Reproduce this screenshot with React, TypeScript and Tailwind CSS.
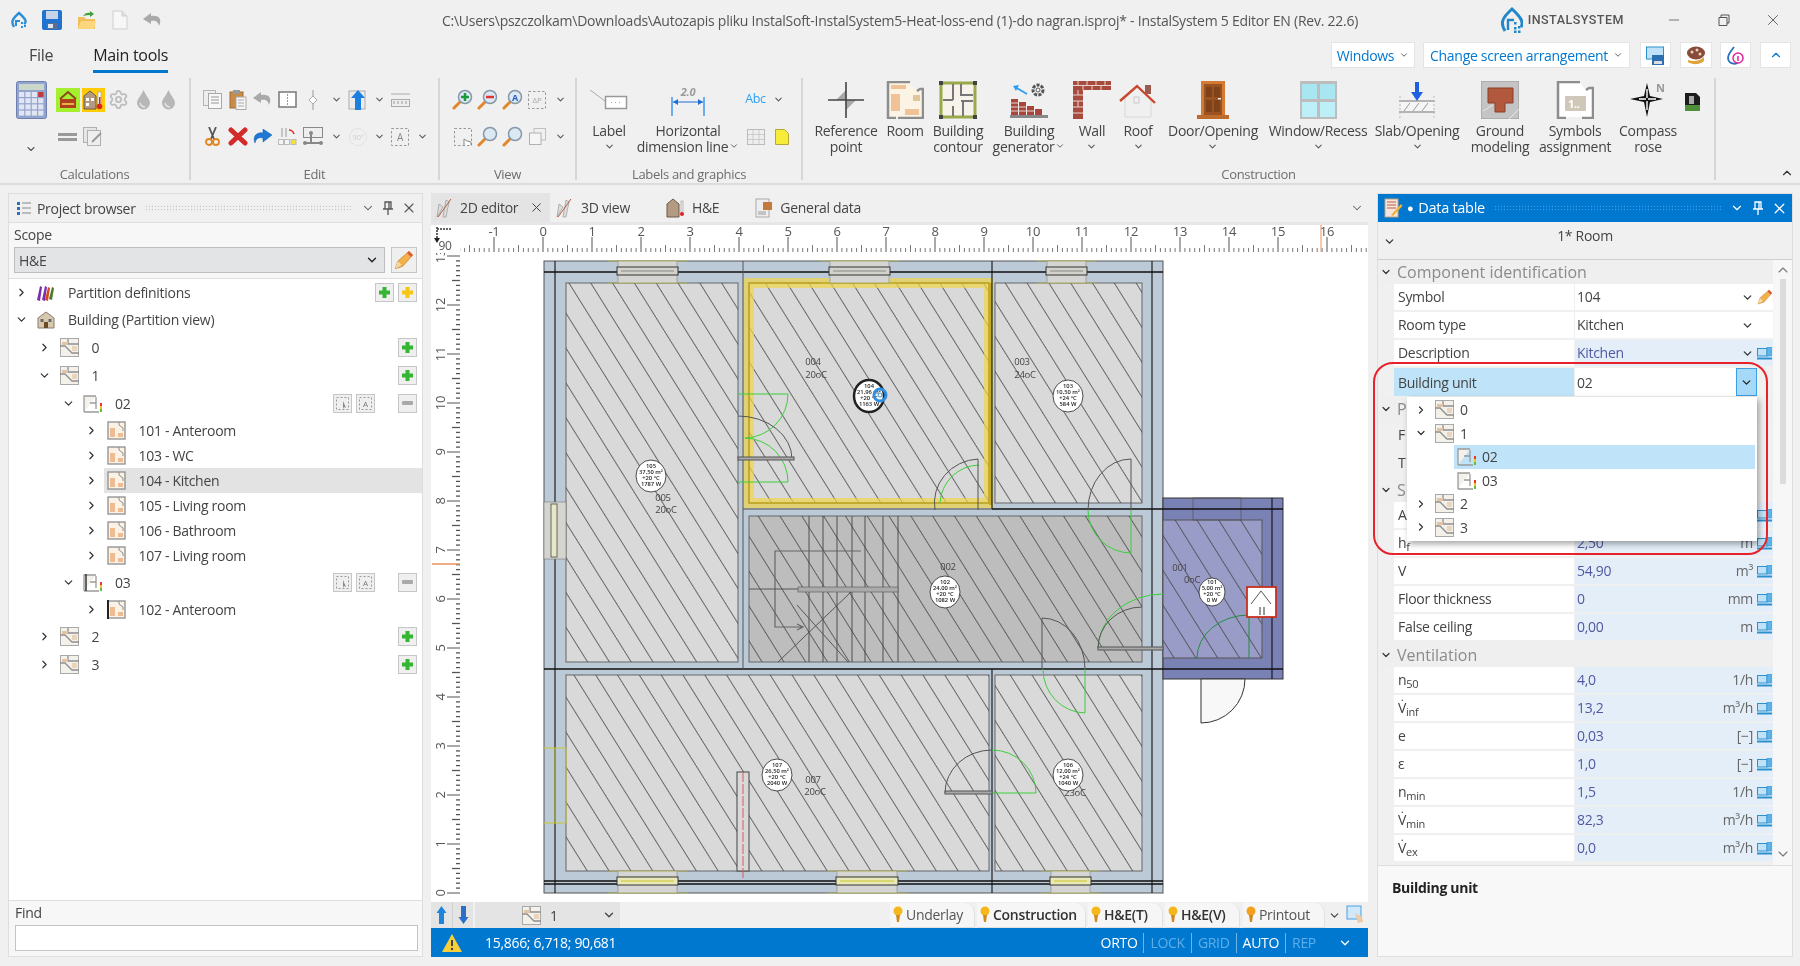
import type { ReactNode } from 'react';
import { ChevronDown, ChevronRight, ChevronUp, X, Minus, Settings } from 'lucide-react';

const Svg = ({ w, h, children, className = '' }: { w: number; h: number; children: ReactNode; className?: string }) => (
  <svg width={w} height={h} viewBox={`0 0 ${w} ${h}`} className={`shrink-0 ${className}`}>{children}</svg>
);

const Chev = ({ s = 12, c = 'text-[#555]' }: { s?: number; c?: string }) => <ChevronDown size={s} strokeWidth={2.2} className={`shrink-0 ${c}`} />;

/* ---------- title bar icons ---------- */
const HomeIcon = () => (
  <Svg w={16} h={18}>
    <path d="M3 16 C0 11 1 8 8 2 C15 8 16 11 13 13" fill="none" stroke="#2a8fd8" strokeWidth="2.4" />
    <path d="M5 15 V10 H9" fill="none" stroke="#2a8fd8" strokeWidth="2" />
    <path d="M10 11h2v2h-2zM13 14h2v2h-2zM10 15h2v2h-2z" fill="#2a8fd8" />
  </Svg>
);
const SaveIcon = () => (
  <Svg w={20} h={20}>
    <rect width="20" height="20" rx="2" fill="#2272cf" />
    <rect x="4" y="1" width="12" height="8" fill="#c7d4e6" />
    <rect x="5" y="13" width="10" height="6" fill="#5d6f8f" />
    <rect x="6" y="14" width="5" height="4" fill="#dfe6ef" />
  </Svg>
);
const OpenIcon = () => (
  <Svg w={20} h={20}>
    <path d="M1 7h6l2 2h9v10H1z" fill="#f0bf5a" />
    <path d="M1 19 4 11h15l-2 8z" fill="#fcd67e" />
    <path d="M6 6C8 3 11 2 13 3l0-2 4 3-4 3V5C11 5 9 5 6 6z" fill="#3aa13a" />
  </Svg>
);
const NewIcon = () => (
  <Svg w={16} h={20}>
    <path d="M1 1h9l5 5v13H1z" fill="#f7f7f7" stroke="#cfcfcf" />
    <path d="M10 1v5h5" fill="#e0e0e0" stroke="#cfcfcf" />
  </Svg>
);
const UndoIcon = ({ c = '#a9a9a9' }: { c?: string }) => (
  <Svg w={20} h={17}>
    <path d="M8 1 0 7l8 5V9c4-1 7 0 8 5 3-6 1-11-8-10z" fill={c} />
  </Svg>
);
const Logo = () => (
  <div className="flex items-center gap-[5px]">
    <Svg w={22} h={26}>
      <path d="M4 24C-1 16 1 11 11 2c10 9 12 14 9 18" fill="none" stroke="#2187c9" strokeWidth="3" />
      <path d="M7 23V13h6" fill="none" stroke="#2187c9" strokeWidth="2.4" />
      <path d="M13 15h2.500v2.500H13zM17 19h2.500v2.500H17zM13 20h2.500v2.500H13zM13 23.500h2.500V26H13zM17 23.500h2.500V26H17z" fill="#2187c9" />
    </Svg>
    <span className="font-['Roboto',sans-serif] text-[12.500px] font-medium tracking-[0.5px] text-[#555]">INSTALSYSTEM</span>
  </div>
);

/* ---------- ribbon icons ---------- */
const CalcIcon = () => (
  <Svg w={31} h={38}>
    <rect x=".5" y=".5" width="30" height="37" rx="2" fill="#93a4cf" stroke="#6e80ad" />
    <rect x="3" y="3" width="25" height="6" fill="#c9d8c8" />
    {[0, 1, 2, 3].map((r) => [0, 1, 2, 3].map((c) => (
      <rect key={`${r}${c}`} x={3 + c * 6.4} y={11 + r * 6.200} width="5.200" height="5" fill={r === 0 && c === 3 ? '#c23a3a' : '#e1e6f2'} />
    )))}
  </Svg>
);
const HeatLossIcon = () => (
  <Svg w={24} h={24}>
    <rect width="24" height="24" fill="#a6ef30" />
    <path d="M4 11 12 4l8 7" fill="none" stroke="#8a4b1a" strokeWidth="2" />
    <rect x="4" y="11" width="16" height="9" fill="#b0401c" />
    <rect x="6" y="15" width="12" height="2" fill="#e6b04a" />
  </Svg>
);
const ThermoIcon = () => (
  <Svg w={23} h={24}>
    <rect width="23" height="24" fill="#ffcb05" />
    <path d="M2 21V8l6-5 6 5v13z" fill="#b49a82" stroke="#6b5a49" />
    <rect x="4" y="10" width="3" height="3" fill="#fff" /><rect x="9" y="10" width="3" height="3" fill="#fff" /><rect x="4" y="15" width="3" height="3" fill="#fff" />
    <rect x="16" y="4" width="3" height="13" fill="#fff" stroke="#888" strokeWidth=".5" />
    <rect x="17" y="9" width="1.500" height="9" fill="#d22" /><circle cx="17.500" cy="18.500" r="2.800" fill="#d22" />
  </Svg>
);
const DropIcon = () => (
  <Svg w={15} h={20}>
    <path d="M7.500 0C5 6 1 9 1 13a6.500 6.500 0 0 0 13 0C14 9 10 6 7.500 0z" fill="#b7b7b7" />
    <path d="M4 13c1 3 3 4 5 4" fill="none" stroke="#e4e4e4" strokeWidth="1.500" />
  </Svg>
);
const CopyIcon = () => (
  <Svg w={19} h={19}>
    <rect x=".5" y=".5" width="12" height="15" fill="#ededed" stroke="#b5b5b5" />
    <rect x="5.500" y="3.500" width="13" height="15" fill="#f7f7f7" stroke="#a8a8a8" />
    <path d="M8 7h8M8 10h8M8 13h8" stroke="#999" />
  </Svg>
);
const PasteIcon = () => (
  <Svg w={18} h={20}>
    <rect x="1" y="2" width="13" height="16" fill="#c98a4a" stroke="#a26a33" />
    <rect x="4" y="0" width="7" height="4" fill="#999" />
    <rect x="7" y="7" width="10" height="12.500" fill="#f5f5f5" stroke="#aaa" />
    <path d="M9 10h6M9 13h6M9 16h6" stroke="#aaa" />
  </Svg>
);
const MirrorIcon = () => (
  <Svg w={19} h={17}>
    <rect x="1" y="1" width="17" height="15" fill="#fff" stroke="#777" strokeWidth="1.500" />
    <path d="M9.500 0v17" stroke="#999" strokeDasharray="2 1" />
  </Svg>
);
const NodeIcon = () => (
  <Svg w={12} h={20}>
    <path d="M6 0v7M6 13v7" stroke="#999" /><path d="M6 6l4 4-4 4-4-4z" fill="#fff" stroke="#aaa" />
  </Svg>
);
const UpDocIcon = () => (
  <Svg w={19} h={20}>
    <rect x="1" y="1" width="16" height="18" fill="#ececec" stroke="#aaa" />
    <path d="M10 0l7 8h-4v12H7V8H3z" fill="#1b7fe0" />
  </Svg>
);
const DimBarIcon = () => (
  <Svg w={19} h={14}>
    <path d="M0 1h19" stroke="#aaa" /><rect x=".5" y="6.500" width="18" height="7" fill="#eee" stroke="#aaa" />
    <path d="M3 8v3M7 8v3M11 8v3M15 8v3" stroke="#999" />
  </Svg>
);
const ScissorsIcon = () => (
  <Svg w={15} h={19}>
    <path d="M4 0l5 12M11 0 6 12" stroke="#555" strokeWidth="1.800" />
    <circle cx="4" cy="15" r="3" fill="none" stroke="#e2851f" strokeWidth="1.800" /><circle cx="11" cy="15" r="3" fill="none" stroke="#e2851f" strokeWidth="1.800" />
  </Svg>
);
const RedX = () => (
  <Svg w={20} h={19}>
    <path d="M3 3l14 13M17 3 3 16" stroke="#d32a2a" strokeWidth="5" strokeLinecap="round" />
  </Svg>
);
const RedoIcon = () => (
  <Svg w={19} h={16}>
    <path d="M2 14C-1 7 4 3 10 4V0l9 6-9 7V9C6 8 3 9 2 14z" fill="#1f78d4" stroke="#0f5aa8" strokeWidth=".5" />
  </Svg>
);
const PaletteIcon = () => (
  <Svg w={19} h={17}>
    <path d="M4 0v9M8 0v9" stroke="#999" /><path d="M11 2c3 0 4 1 5 4" stroke="#d33" fill="none" strokeWidth="1.500" />
    <rect x=".5" y="11.500" width="5" height="5" fill="#f4f4f4" stroke="#bbb" /><rect x="6.500" y="11.500" width="5" height="5" fill="#f4f4f4" stroke="#bbb" /><rect x="13" y="11.500" width="5" height="5" fill="#f2e23a" stroke="#bbb" />
  </Svg>
);
const ConnectIcon = () => (
  <Svg w={20} h={19}>
    <rect x=".5" y=".5" width="19" height="10" fill="#eee" stroke="#888" />
    <path d="M8 5v12M2 16h16" stroke="#888" strokeWidth="2" /><circle cx="8" cy="6" r="2" fill="#888" /><circle cx="2" cy="16" r="2" fill="#888" /><circle cx="18" cy="16" r="2" fill="#888" />
  </Svg>
);
const Rot90Icon = () => (
  <Svg w={20} h={18}>
    <circle cx="10" cy="9" r="8.500" fill="none" stroke="#e2e2e2" />
    <text x="10" y="12" textAnchor="middle" fontSize="8" fill="#d0d0d0">90°</text>
  </Svg>
);
const DashBox = ({ children }: { children: ReactNode }) => (
  <Svg w={18} h={18}>
    <rect x=".5" y=".5" width="17" height="17" fill="none" stroke="#999" strokeDasharray="2.500 2" />
    {children}
  </Svg>
);
const Mag = ({ children }: { children?: ReactNode }) => (
  <Svg w={21} h={21}>
    <path d="M2 19l6-6" stroke="#e3862a" strokeWidth="3" strokeLinecap="round" />
    <circle cx="13" cy="8" r="6.500" fill="#dce8f2" stroke="#8597a8" strokeWidth="1.500" />
    {children}
  </Svg>
);
const Stack = () => (
  <Svg w={17} h={17}>
    <rect x="5" y=".5" width="11.500" height="11.500" fill="none" stroke="#c0c0c0" /><rect x=".5" y="5" width="11.500" height="11.500" fill="#f5f5f5" stroke="#b0b0b0" />
  </Svg>
);
const LeaderIcon = () => (
  <Svg w={38} h={20}>
    <path d="M0 0l15 11" stroke="#aaa" />
    <rect x="15.500" y="6.500" width="21" height="12" fill="#fff" stroke="#999" strokeWidth="1.500" />
    <path d="M21 12.500h1M25 12.500h1M29 12.500h1" stroke="#aaa" />
  </Svg>
);
const DimIcon = () => (
  <Svg w={34} h={34}>
    <text x="17" y="13" textAnchor="middle" fontSize="11" fontStyle="italic" fontWeight="700" fill="#9a9a9a">2.0</text>
    <path d="M1 14v19M33 14v19" stroke="#3f97f0" strokeWidth="1.500" /><path d="M2 19h30" stroke="#1f6fd0" />
    <path d="M2 19l5-3v6zM32 19l-5-3v6z" fill="#1f6fd0" />
  </Svg>
);
const TableIcon = () => (
  <Svg w={18} h={16}>
    <rect x=".5" y=".5" width="17" height="15" fill="#eee" stroke="#bbb" />
    <path d="M6 1v14M12 1v14M1 5.500h16M1 10.500h16" stroke="#ccc" />
  </Svg>
);
const NoteIcon = () => (
  <Svg w={14} h={16}>
    <path d="M.5.500h9l4 4v11H.5z" fill="#f8ec3a" stroke="#b5a83a" />
  </Svg>
);
const RefIcon = () => (
  <Svg w={36} h={36}>
    <path d="M18 18H8L18 8zM18 18h10L18 28z" fill="#a8a8a8" /><path d="M18 0v36M0 18h36" stroke="#444" strokeWidth="1.600" />
  </Svg>
);
const RoomIcon = () => (
  <Svg w={38} h={38}>
    <path d="M2 36V2h22l7 8 3-2h2v28H22" fill="#fbf3e4" />
    <path d="M2 38V1h22M31 10l3-2h3v29H12M2 37h8" fill="none" stroke="#8d8d8d" strokeWidth="2.500" />
    <rect x="5" y="13" width="9" height="17" fill="#f1c197" /><rect x="19" y="28" width="14" height="6" fill="#f1c197" /><rect x="27" y="14" width="7" height="6" fill="#e0c69a" /><rect x="5" y="4" width="15" height="4" fill="#f1c197" />
  </Svg>
);
const ContourIcon = () => (
  <Svg w={38} h={38}>
    <rect x="2" y="2" width="34" height="34" fill="#f7f2ea" stroke="#9aa84a" strokeWidth="3" />
    <path d="M14 3v16M4 19h10M22 3v11h12M22 20h12M14 25v10M24 20v15" fill="none" stroke="#777" strokeWidth="2" />
    <rect width="4" height="4" fill="#444" /><rect x="34" width="4" height="4" fill="#444" /><rect y="34" width="4" height="4" fill="#444" /><rect x="34" y="34" width="4" height="4" fill="#444" />
  </Svg>
);
const GenIcon = () => (
  <Svg w={38} h={38}>
    <path d="M17 13 5 6" stroke="#2a9df4" strokeWidth="1.800" /><path d="M3 5l6-1-3 6z" fill="#2a9df4" />
    <circle cx="28" cy="9" r="5" fill="none" stroke="#555" strokeWidth="3" strokeDasharray="3 1.300" /><circle cx="28" cy="9" r="2" fill="#fff" stroke="#555" />
    <g fill="#a9453a">
      <rect x="1" y="18" width="7" height="16" /><rect x="9" y="21" width="7" height="13" /><rect x="17" y="25" width="7" height="9" /><rect x="25" y="28" width="7" height="6" />
    </g>
    <path d="M1 22h7M1 26h15M1 30h23" stroke="#e5d8d0" />
    <rect y="34" width="38" height="3" fill="#888" />
  </Svg>
);
const WallIcon = () => (
  <Svg w={38} h={38}>
    <path d="M0 0h38v9H10v29H0z" fill="#a84b3e" />
    <path d="M0 4.500h38M5 0v4.500M14 0v4.500M23 0v4.500M32 0v4.500M10 4.500v5M19 4.500v5M28 4.500v5M0 14h10M0 20h10M0 26h10M0 32h10M5 9v5M5 20v6" stroke="#e5d6cc" strokeWidth="1" fill="none" />
  </Svg>
);
const RoofIcon = () => (
  <Svg w={38} h={38}>
    <path d="M6 17 19 6l13 11v19H6z" fill="#f0f0f0" stroke="#d8d8d8" />
    <rect x="26" y="4" width="6" height="9" fill="#9a5b50" />
    <rect x="15" y="16" width="5" height="6" fill="none" stroke="#c9c9c9" />
    <path d="M1 20 18 5l18 17" fill="none" stroke="#c9472b" strokeWidth="2.400" />
  </Svg>
);
const DoorIcon = () => (
  <Svg w={32} h={38}>
    <rect x="4" y="0" width="24" height="34" fill="#d47a33" />
    <rect x="7" y="3" width="18" height="31" fill="#9a5320" />
    <rect x="9" y="6" width="6" height="10" fill="#7e431a" /><rect x="17" y="6" width="6" height="10" fill="#7e431a" /><rect x="9" y="19" width="6" height="12" fill="#7e431a" /><rect x="17" y="19" width="6" height="12" fill="#7e431a" />
    <rect x="21" y="17" width="3" height="1.500" fill="#eee" />
    <rect y="34" width="32" height="4" fill="#bc6b2c" />
  </Svg>
);
const WindowIcon = () => (
  <Svg w={37} h={38}>
    <rect width="37" height="38" fill="#bdbdbd" />
    <rect x="2" y="3" width="15" height="15" fill="#a8e6f2" /><rect x="20" y="3" width="15" height="15" fill="#a8e6f2" /><rect x="2" y="21" width="15" height="15" fill="#bdeff8" /><rect x="20" y="21" width="15" height="15" fill="#bdeff8" />
  </Svg>
);
const SlabIcon = () => (
  <Svg w={36} h={36}>
    <path d="M18 0v12" stroke="#1f5fe0" strokeWidth="4" /><path d="M12 10h12l-6 9z" fill="#1f5fe0" />
    <rect x="2" y="20" width="32" height="9" fill="#f5f5f5" />
    <path d="M0 19h36M0 30h36" stroke="#777" strokeWidth="1.200" /><path d="M5 29l6-8M14 29l6-8M23 29l6-8" stroke="#999" />
    <path d="M1 14v22M35 14v22" stroke="#bbb" strokeDasharray="2 2" />
  </Svg>
);
const GroundIcon = () => (
  <Svg w={38} h={38}>
    <rect width="38" height="38" fill="#c4c4c4" stroke="#999" />
    <path d="M7 7h25v15h-8v9H14v-9H7z" fill="#b2583c" stroke="#8a3f2a" />
    <path d="M2 30l10-6M28 38l10-10" stroke="#e6e6e6" />
  </Svg>
);
const SymbolsIcon = () => (
  <Svg w={38} h={38}>
    <path d="M2 36V2h22l6 7 3-2h3v29" fill="#fff" />
    <path d="M2 38V1h22M30 9l3-2h4v31M2 37h8M26 37h11" fill="none" stroke="#8d8d8d" strokeWidth="2.500" />
    <rect x="9" y="15" width="21" height="15" rx="1" fill="#cfc8b8" />
    <text x="12" y="27" fontSize="11" fill="#fff" fontWeight="700">1..</text>
  </Svg>
);
const CompassIcon = () => (
  <Svg w={38} h={38}>
    <path d="M18 2l3 13 13 3-13 3-3 15-3-15-14-3 14-3z" fill="#111" />
    <path d="M18 8v9M10 18h7M18 20v9M19 18h8" stroke="#fff" strokeWidth="1.400" />
    <text x="27" y="11" fontSize="11" fontWeight="700" fill="#999">N</text>
  </Svg>
);
const PcIcon = () => (
  <Svg w={15} h={18}>
    <path d="M0 0h11l4 4v14H0z" fill="#1c1c1c" /><rect y="12" width="15" height="6" fill="#4f8f3a" />
    <rect x="4" y="3" width="5" height="8" fill="#aaa" />
  </Svg>
);

const Slot = ({ w, children }: { w: number; children?: ReactNode }) => (
  <span className="flex items-center justify-center shrink-0" style={{ width: w }}>{children}</span>
);

const Group = ({ w, label, children }: { w: number; label: string; children: ReactNode }) => (
  <div className="flex h-[102px] shrink-0 flex-col border-r-2 border-[#d6d6d6]" style={{ width: w }}>
    <div className="flex h-[88px] shrink-0 pt-[3px]">{children}</div>
    <div className="mt-[1px] h-[15px] shrink-0 text-center text-[13px] leading-[15px] text-[#6d6d6d]">{label}</div>
  </div>
);

const Big = ({ w, icon, lines, chev, inlineChev }: { w: number; icon: ReactNode; lines: string[]; chev?: boolean; inlineChev?: boolean }) => (
  <div className="flex shrink-0 flex-col items-center text-[14px] leading-[15.500px] text-[#444]" style={{ width: w }}>
    <div className="flex h-[38px] items-center">{icon}</div>
    <div className="mt-[4px] whitespace-nowrap text-center">
      {lines.map((l, i) => (
        <div key={l} className="flex items-center justify-center gap-[1px]">{l}{inlineChev && i === lines.length - 1 && <Chev s={10} />}</div>
      ))}
      {chev && <div className="flex h-[15.500px] items-center justify-center"><Chev s={11} /></div>}
    </div>
  </div>
);

/* ---------- tree icons ---------- */
const FloorIcon = () => (
  <Svg w={19} h={19}>
    <rect x=".5" y=".5" width="18" height="18" fill="#f4f1ea" stroke="#a9a9a9" />
    <path d="M0 8h5l7 7h7M8 1v5h11" fill="none" stroke="#8f8f8f" strokeWidth="1.300" />
    <rect x="2" y="4" width="6" height="3" fill="#e2c5a4" /><rect x="12" y="8" width="5" height="5" fill="#e8d5bc" />
  </Svg>
);
const PartIcon = ({ dark }: { dark?: boolean }) => (
  <Svg w={20} h={19}>
    <path d="M1 18V2h12M13 3v12M7 9h6M1 18h15" fill="#f4f1ea" stroke="#9a9a9a" strokeWidth="1.300" />
    {dark && <path d="M3 1v17" stroke="#333" strokeWidth="1.500" />}
    <rect x="17" y="9" width="2" height="3" fill="#e33" /><rect x="17" y="12" width="2" height="3" fill="#f2c12a" /><rect x="17" y="15" width="2" height="3" fill="#5ac23a" />
  </Svg>
);
const RoomTree = ({ dark }: { dark?: boolean }) => (
  <Svg w={19} h={19}>
    <rect x="1" y="1" width="17" height="17" fill="#fbf1e4" stroke="#8e8e8e" strokeWidth="1.300" />
    <rect x="3" y="7" width="5" height="9" fill="#eebc90" /><rect x="11" y="12" width="5" height="4" fill="#eebc90" /><path d="M12 1v3l4 3v3" fill="none" stroke="#8e8e8e" />
    {dark && <path d="M1 0v19" stroke="#222" strokeWidth="2" />}
  </Svg>
);
const TreeBtn = ({ kind }: { kind: 'green' | 'yellow' | 'minus' | 'sel' | 'a' }) => (
  <span className="flex h-[19px] w-[19px] shrink-0 items-center justify-center border border-[#c6c6c6] bg-[#efefef]">
    {kind === 'green' && <Svg w={13} h={13}><path d="M6.500 1v11M1 6.500h11" stroke="#35b531" strokeWidth="4" /></Svg>}
    {kind === 'yellow' && <Svg w={13} h={13}><path d="M6.500 1v11M1 6.500h11" stroke="#f5c518" strokeWidth="4" /></Svg>}
    {kind === 'minus' && <span className="h-[4px] w-[11px] rounded-[1px] bg-[#a9a9a9]" />}
    {kind === 'sel' && <Svg w={13} h={13}><rect x=".5" y=".5" width="12" height="12" fill="none" stroke="#999" strokeDasharray="2 2" /><path d="M7 4l3 7-2-1-1 2z" fill="#888" /></Svg>}
    {kind === 'a' && <Svg w={13} h={13}><rect x=".5" y=".5" width="12" height="12" fill="none" stroke="#999" strokeDasharray="2 2" /><text x="6.500" y="9.500" textAnchor="middle" fontSize="8" fill="#777">A</text></Svg>}
  </span>
);

type TreeRowProps = { h: number; level: number; open?: boolean; icon: ReactNode; text: string; btns?: ReactNode; selected?: boolean };
const TreeRow = ({ h, level, open, icon, text, btns, selected }: TreeRowProps) => (
  <div className="relative flex items-center text-[14px] text-[#444]" style={{ height: h }}>
    <span className="flex w-[14px] shrink-0 justify-center" style={{ marginLeft: 5 + level * 23.500 }}>
      {open ? <ChevronDown size={13} strokeWidth={2.2} className="text-[#333]" /> : <ChevronRight size={13} strokeWidth={2.2} className="text-[#333]" />}
    </span>
    <div className={`ml-[5px] flex h-full flex-1 items-center pl-[3px] ${selected ? 'mr-[-5px] bg-[#e3e3e3]' : ''}`}>
      <span className="flex w-[19px] justify-center">{icon}</span>
      <span className="ml-[13px] whitespace-pre">{text}</span>
      <span className="ml-auto flex items-center">{btns}</span>
    </div>
  </div>
);

const Pin = ({ c = '#555' }: { c?: string }) => (
  <Svg w={10} h={14}><path d="M2 1h6v7H2zM0 8h10M5 8v6M6 1v7" fill="none" stroke={c} strokeWidth="1.300" /></Svg>
);
const Grip = ({ c }: { c: string }) => (
  <span className="block h-[7px] flex-1" style={{ backgroundImage: `radial-gradient(${c} 0.7px, transparent 0.8px)`, backgroundSize: '3px 3px' }} />
);
const Pencil = () => (
  <Svg w={16} h={16}>
    <path d="M1 15l2-6 9-8 3 3-8 9z" fill="#f4b04a" stroke="#c9842a" strokeWidth=".6" /><path d="M1 15l2-6 3 3z" fill="#f3d9b0" /><path d="M12 1l3 3-1.500 1.500-3-3z" fill="#e05a3a" />
  </Svg>
);
const Computer = () => (
  <Svg w={15} h={13}>
    <rect x=".5" y="1.500" width="9.500" height="7.500" fill="#bfe2f8" stroke="#2b8fd0" /><rect x="10" y="0" width="4.500" height="9" fill="#5db4e8" stroke="#2b8fd0" strokeWidth=".6" /><rect x="0" y="10.500" width="15" height="2" fill="#2b8fd0" />
  </Svg>
);

/* ---------- canvas drawing: coordinates are screen pixels ---------- */
const hTicks = Array.from({ length: 186 }, (_, i) => i - 17);
const vTicks = Array.from({ length: 134 }, (_, i) => i);
const wall = '#bcc9d6';

const Tag = ({ x, y, t, r = 15, thick }: { x: number; y: number; t: string[]; r?: number; thick?: boolean }) => (
  <g>
    <ellipse cx={x} cy={y} rx={r} ry={r + 1} fill="#fff" stroke="#222" strokeWidth={thick ? 2.500 : 0.800} />
    {t.map((s, i) => (
      <text key={i} x={x} y={y - 8 + i * 6} textAnchor="middle" fontSize="5.800" fontWeight="600" letterSpacing="0" fill="#222">{s}</text>
    ))}
  </g>
);
const Lab = ({ x, y, t }: { x: number; y: number; t: string }) => (
  <text x={x} y={y} textAnchor="middle" fontSize="9.500" fill="#444">{t}</text>
);
const Win = ({ x, w, y, top }: { x: number; w: number; y: number; top?: boolean }) => (
  <g>
    <rect x={x} y={y} width={w} height="22" fill="#d5d5d3" stroke="#888" strokeWidth=".6" />
    <rect x={x - 1} y={y + 6} width={w + 2} height="8" fill={top ? '#d2d2cc' : '#e8e8b8'} stroke="#333" strokeWidth="1" />
    <path d={`M${x + 3} ${y + 10}h${w - 6}`} stroke={top ? '#888' : '#c8c820'} />
    <path d={`M${x - 10} ${y}h${w + 20}M${x - 10} ${y + 22}h${w + 20}`} stroke="#c8c830" strokeWidth=".5" />
  </g>
);

const Plan = () => (
  <svg width={937} height={680} viewBox="431 222 937 680" className="block">
    <defs>
      <pattern id="hatch" width="18.500" height="18.500" patternUnits="userSpaceOnUse" patternTransform="rotate(58)">
        <line x1="0" y1="0.500" x2="18.500" y2="0.500" stroke="#444" strokeWidth=".75" />
      </pattern>
    </defs>
    <rect x="431" y="222" width="937" height="680" fill="#fff" />

    {/* horizontal ruler */}
    {hTicks.map((i) => {
      const x = 543 + i * 4.900;
      const top = i % 10 === 0 ? 237 : i % 5 === 0 ? 245 : 248;
      return <line key={i} x1={x} x2={x} y1={top} y2={252} stroke="#555" strokeWidth={i % 10 === 0 ? 1 : 0.800} />;
    })}
    {hTicks.filter((i) => i % 10 === 0).map((i) => (
      <text key={i} x={543 + i * 4.900} y={236} textAnchor="middle" fontSize="13" fill="#555">{i / 10}</text>
    ))}
    <line x1="1321" x2="1321" y1="222" y2="252" stroke="#e8925a" />

    {/* vertical ruler */}
    {vTicks.map((i) => {
      const y = 893 - i * 4.900;
      const left = i % 10 === 0 ? 447 : i % 5 === 0 ? 452 : 456;
      return <line key={i} y1={y} y2={y} x1={left} x2={460} stroke="#555" strokeWidth={i % 10 === 0 ? 1 : 1.300} />;
    })}
    {vTicks.filter((i) => i % 10 === 0).map((i) => (
      <text key={i} x={0} y={0} transform={`translate(445 ${893 - i * 4.900}) rotate(-90)`} textAnchor="middle" fontSize="13" fill="#555">{i / 10}</text>
    ))}
    <line x1="432" x2="460" y1="564" y2="564" stroke="#e8925a" strokeWidth="1.500" />

    {/* corner */}
    <rect x="431" y="222" width="29" height="31" fill="#fff" />
    <rect x="431" y="222" width="937" height="3" fill="#e6e6e6" />
    <path d="M437 227v15M437 229h14" stroke="#333" strokeWidth="1.500" strokeDasharray="2 1" />
    <path d="M434 238h6l-3 5z" fill="#222" />
    <text x="445" y="250" textAnchor="middle" fontSize="12" fill="#555">90</text>

    {/* shell */}
    <rect x="544" y="261" width="619" height="632" fill={wall} stroke="#555" />
    <rect x="1163" y="498" width="120" height="181" fill="#7a82b5" stroke="#333" />
    <rect x="1163" y="520" width="99" height="138" fill="#9a9cc8" stroke="#555" />
    <rect x="1163" y="520" width="99" height="138" fill="url(#hatch)" />
    <rect x="1193" y="498" width="48" height="22" fill="none" stroke="#555" strokeWidth=".7" />

    {[
      [566, 283, 172, 379],
      [749, 283, 240, 220],
      [995, 283, 147, 220],
      [566, 675, 423, 196],
      [995, 675, 147, 196],
    ].map(([x, y, w, h]) => (
      <g key={`${x}${y}`}>
        <rect x={x} y={y} width={w} height={h} fill="#d9d9d9" stroke="#666" />
        <rect x={x} y={y} width={w} height={h} fill="url(#hatch)" />
      </g>
    ))}
    <rect x="749" y="516" width="393" height="146" fill="#bdbdbd" stroke="#666" />
    <rect x="749" y="516" width="393" height="146" fill="url(#hatch)" />

    {/* stairs */}
    <path d="M809 516v146M823 516v146M837 516v146M852 516v146M865 516v146M883 516v146M898 516v146" stroke="#444" strokeWidth=".9" />
    <path d="M861 551H775V627H803M797 624l6 3-6 3" fill="none" stroke="#666" strokeWidth="1.200" />
    <rect x="798" y="587" width="100" height="5" fill="#aaa" stroke="#555" strokeWidth=".6" />
    <path d="M749 589h49M851 592 778 662M797 605l51 57" stroke="#555" />

    {/* highlighted room */}
    <rect x="749" y="283" width="240" height="220" fill="none" stroke="#efd54a" strokeWidth="10" opacity=".7" />
    <rect x="749" y="283" width="240" height="220" fill="none" stroke="#bda320" strokeWidth="1.500" />
    <rect x="989" y="283" width="3" height="222" fill="#c7ac1f" />

    {/* structure lines */}
    <path d="M544 272H1163M992 509H1283M544 669H1283M544 881H1163M544 884H1163" stroke="#111" strokeWidth="1.600" />
    <path d="M743 509H992" stroke="#777" strokeWidth="1.400" />
    <path d="M555 261V893M1152 261V893M992 261V509M992 669V893M1272 498V679" stroke="#111" strokeWidth="1.100" />
    <path d="M743 261V669" stroke="#555" />

    {/* windows */}
    <Win x={618} w={59} y={261} top /><Win x={830} w={59} y={261} top /><Win x={1047} w={39} y={261} top />
    <Win x={618} w={59} y={871} /><Win x={837} w={60} y={871} /><Win x={1051} w={39} y={871} />
    <rect x="544" y="502" width="22" height="57" fill="#d5d5d0" stroke="#777" strokeWidth=".6" />
    <rect x="551" y="504" width="6" height="53" fill="#e8e8c8" stroke="#333" strokeWidth=".7" />
    <path d="M544 748h22v75h-22M555 748v75" fill="none" stroke="#c8c830" />

    {/* doors */}
    <g fill="none" stroke="#3dcf3d" strokeWidth="1">
      <path d="M738 394H788A44 44 0 0 1 745 438A44 44 0 0 1 788 482H738" />
      <path d="M979 465A40 40 0 0 0 940 503" />
      <path d="M1131 510V553A43 43 0 0 1 1088 510" />
      <path d="M1163 594A65 55 0 0 0 1098 648" />
      <path d="M1043 669A43 44 0 0 0 1085 713V669" />
      <path d="M992 750A44 43 0 0 1 1036 793H992" />
      <path d="M1197 658A52 43 0 0 1 1249 615V658" stroke="#1f8f3f" />
    </g>
    <g fill="none" stroke="#555" strokeWidth="1">
      <path d="M738 416A54 43 0 0 1 792 459" />
      <rect x="738" y="457" width="56" height="3" fill="#aaa" />
      <path d="M978 459V510M978 459A46 44 0 0 0 935 510" />
      <path d="M1131 459V510M1131 459A43 51 0 0 0 1088 510" />
      <path d="M1142 607A44 41 0 0 0 1098 648" />
      <rect x="1098" y="647" width="65" height="3" fill="#aaa" />
      <path d="M1042 669V618A43 51 0 0 1 1085 669" />
      <path d="M945 793A47 43 0 0 1 992 750" />
      <rect x="945" y="791" width="47" height="3" fill="#aaa" />
    </g>
    <path d="M1201 679V723A44 44 0 0 0 1245 679z" fill="#f8f8f8" stroke="#333" />
    <rect x="737" y="772" width="12" height="99" fill="#d9d9d9" stroke="#444" />
    <path d="M743 772V878" stroke="#d65a5a" strokeDasharray="10 2" />

    {/* labels and tags */}
    <Lab x={813} y={365} t="004" /><Lab x={816} y={378} t="20oC" />
    <Lab x={1022} y={365} t="003" /><Lab x={1025} y={378} t="24oC" />
    <Lab x={663} y={501} t="005" /><Lab x={666} y={513} t="20oC" />
    <Lab x={948} y={570} t="002" />
    <Lab x={1180} y={571} t="001" /><Lab x={1192} y={583} t="0oC" />
    <Lab x={813} y={783} t="007" /><Lab x={815} y={795} t="20oC" />
    <Lab x={1075} y={796} t="23oC" />
    <Tag x={651} y={476} t={['105', '37,50 m²', '+20 °C', '1787 W']} />
    <Tag x={869} y={396} t={['104', '21,96 m²', '+20 °C', '1163 W']} thick />
    <Tag x={1068} y={396} t={['103', '10,50 m²', '+24 °C', '584 W']} />
    <Tag x={945} y={592} t={['102', '24,00 m²', '+20 °C', '1082 W']} />
    <Tag x={1212} y={592} r={13} t={['101', '5,00 m²', '+20 °C', '0 W']} />
    <Tag x={777} y={775} t={['107', '26,50 m²', '+20 °C', '2040 W']} />
    <Tag x={1068} y={775} t={['106', '12,00 m²', '+24 °C', '1040 W']} />
    <circle cx="880" cy="395" r="6" fill="none" stroke="#2f8fe0" strokeWidth="3" /><circle cx="880" cy="395" r="2" fill="#fff" stroke="#2f8fe0" />

    <rect x="1247" y="587" width="29" height="30" fill="#fff" stroke="#c8301e" strokeWidth="1.800" />
    <path d="M1251 604l10-13 10 13" fill="none" stroke="#555" />
    <path d="M1260 607v8M1264 607v8" stroke="#333" />
  </svg>
);

/* ---------- data table ---------- */
const Sub = ({ t }: { t: string }) => <sub className="text-[11px] leading-none">{t}</sub>;

const Section = ({ t, h = 24 }: { t: string; h?: number }) => (
  <div className="flex items-center bg-[#efefef] pl-[1px]" style={{ height: h }}>
    <span className="flex w-[14px] justify-center"><ChevronDown size={12} strokeWidth={2.4} className="text-[#333]" /></span>
    <span className="ml-[4px] text-[16px] tracking-normal text-[#8b8b8b]">{t}</span>
  </div>
);

type RowProps = { label: ReactNode; value?: string; unit?: string; live?: boolean; comp?: boolean; chev?: boolean; pen?: boolean; plain?: boolean };
const Row = ({ label, value, unit, live, comp, chev, pen, plain }: RowProps) => (
  <div className="flex h-[28px] bg-[#f0f0f0] pl-[16px] text-[14px] leading-none text-[#444]">
    <div className={`flex w-[180px] items-center border-b-2 border-[#f0f0f0] pl-[4px] ${plain ? 'bg-[#f0f0f0]' : 'bg-white'}`}>{label}</div>
    <div className={`ml-[1px] flex w-[198px] items-center border-b-2 border-[#f0f0f0] pl-[2px] ${plain ? 'bg-[#f0f0f0]' : live ? 'bg-[#e3eef9] text-[#5159a0]' : 'bg-white'}`}>
      <span>{value}</span>
      <span className="ml-auto flex items-center">
        {unit && <span className="mr-[3px] text-[#666]">{unit}</span>}
        {chev && <span className="mr-[2px]"><ChevronDown size={13} strokeWidth={2.4} className="text-[#333]" /></span>}
        <span className="flex w-[17px] justify-center">
          {pen && <Pencil />}
          {comp && <Computer />}
        </span>
      </span>
    </div>
  </div>
);

const DropRow = ({ open, leaf, icon, t, selected }: { open?: boolean; leaf?: boolean; icon: ReactNode; t: string; selected?: boolean }) => (
  <div className="flex h-[23.500px] items-center text-[14px] text-[#444]">
    {!leaf && (
      <span className="ml-[7px] flex w-[13px] justify-center">
        {open ? <ChevronDown size={12} strokeWidth={2.4} className="text-[#333]" /> : <ChevronRight size={12} strokeWidth={2.4} className="text-[#333]" />}
      </span>
    )}
    <div className={`flex h-full flex-1 items-center ${leaf ? 'ml-[47px] pl-[3px]' : 'ml-[8px]'} ${selected ? 'mr-[2px] bg-[#bfe3f8]' : ''}`}>
      {icon}
      <span className={leaf ? 'ml-[5px]' : 'ml-[6px]'}>{t}</span>
    </div>
  </div>
);

export default function App() {
  return (
    <div className="relative flex h-[966px] w-[1800px] flex-col overflow-hidden bg-[#f0f0f0] font-['Open_Sans',sans-serif] tracking-[-0.3px] text-[#444] blur-[0.35px]">
      {/* title bar */}
      <div className="grid h-[40px] shrink-0 grid-cols-[1fr_auto_1fr] items-center">
        <div className="flex items-center gap-[15px] pl-[11px]">
          <HomeIcon /><SaveIcon /><OpenIcon /><NewIcon /><UndoIcon />
        </div>
        <div className="text-[14px] tracking-[-0.25px] text-[#555]">C:\Users\pszczolkam\Downloads\Autozapis pliku InstalSoft-InstalSystem5-Heat-loss-end (1)-do nagran.isproj* - InstalSystem 5 Editor EN (Rev. 22.6)</div>
        <div className="flex items-center justify-end pr-[18px]">
          <Logo />
          <Minus size={16} strokeWidth={1.2} className="ml-[42px] text-[#555]" />
          <Svg w={12} h={12} className="ml-[36px]"><path d="M1 3.500h8v8H1zM3 3.500V1h8v8H9" fill="none" stroke="#555" /></Svg>
          <X size={18} strokeWidth={1.2} className="ml-[34px] text-[#555]" />
        </div>
      </div>

      {/* ribbon tabs */}
      <div className="flex h-[38px] shrink-0 items-start">
        <span className="ml-[29px] mt-[3px] text-[16px] text-[#444]">File</span>
        <span className="ml-[40px] h-[33px] border-b-[3px] border-[#0078d0] pt-[3px] text-[16px] font-medium text-[#222]">Main tools</span>
        <div className="ml-auto mr-[9px] mt-[2px] flex items-center text-[14px] text-[#0078d0]">
          <span className="flex h-[26px] w-[84px] items-center justify-center gap-[5px] border border-[#e4e4e4] bg-white">Windows <Chev s={10} /></span>
          <span className="ml-[8px] flex h-[26px] w-[207px] items-center justify-center gap-[5px] border border-[#e4e4e4] bg-white">Change screen arrangement <Chev s={10} /></span>
          <span className="ml-[10px] flex h-[26px] w-[31px] items-center justify-center border border-[#e4e4e4] bg-white">
            <Svg w={19} h={19}><rect x=".5" y="1" width="17" height="12" fill="#bfe2f8" stroke="#2b8fd0" /><rect x="6" y="9" width="12" height="10" fill="#2b6fb0" /><rect x="8" y="15" width="8" height="3" fill="#ddd" /></Svg>
          </span>
          <span className="ml-[9px] flex h-[26px] w-[32px] items-center justify-center border border-[#e4e4e4] bg-white">
            <Svg w={20} h={19}><ellipse cx="10" cy="7" rx="9" ry="6.500" fill="#8a4a3a" /><circle cx="6" cy="6" r="1.500" fill="#e6d2c2" /><circle cx="11" cy="4" r="1.500" fill="#e6d2c2" /><circle cx="14" cy="8" r="1.500" fill="#e6d2c2" /><path d="M2 14c6 2 12 1 16-3v4c-4 4-12 4-16 1z" fill="#e2a23a" /></Svg>
          </span>
          <span className="ml-[8px] flex h-[26px] w-[31px] items-center justify-center border border-[#e4e4e4] bg-white">
            <Svg w={17} h={19}><path d="M7 1C4 5 1 8 1 12a6 6 0 0 0 11 3" fill="none" stroke="#2b6fc0" strokeWidth="1.800" /><circle cx="11" cy="12" r="5" fill="#fff" stroke="#e0249a" strokeWidth="1.500" /><path d="M11 10v5" stroke="#e0249a" strokeWidth="1.500" /></Svg>
          </span>
          <span className="ml-[9px] flex h-[26px] w-[31px] items-center justify-center border border-[#e4e4e4] bg-white"><ChevronUp size={14} strokeWidth={2} /></span>
        </div>
      </div>

      {/* ribbon */}
      <div className="relative flex h-[107px] shrink-0 border-b-2 border-[#dcdcdc]">
        <Group w={191} label="Calculations">
          <div className="flex w-[56px] flex-col items-center pl-[6px]">
            <CalcIcon />
            <Chev s={12} c="text-[#555] mt-[24px]" />
          </div>
          <div className="flex flex-col">
            <div className="flex h-[37px] items-center">
              <HeatLossIcon /><span className="ml-[2px]"><ThermoIcon /></span>
              <Settings size={21} className="ml-[3px] text-[#bdbdbd]" strokeWidth={2} />
              <span className="ml-[7px]"><DropIcon /></span><span className="ml-[10px]"><DropIcon /></span>
            </div>
            <div className="flex h-[37px] items-center pl-[2px]">
              <Svg w={19} h={8}><rect width="19" height="3" fill="#999" /><rect y="5" width="19" height="3" fill="#999" /></Svg>
              <Svg w={20} h={19} className="ml-[6px]"><rect x=".5" y=".5" width="13" height="15" fill="#e6e6e6" stroke="#b0b0b0" /><rect x="4.500" y="3.500" width="13" height="15" fill="#eee" stroke="#b0b0b0" /><path d="M9 15 18 6" stroke="#999" strokeWidth="2" /></Svg>
            </div>
          </div>
        </Group>
        <Group w={249} label="Edit">
          <div className="ml-[9px] flex flex-col">
            <div className="flex h-[37px] items-center">
              <Slot w={25}><CopyIcon /></Slot><Slot w={25}><PasteIcon /></Slot><Slot w={25}><UndoIcon /></Slot><Slot w={25}><MirrorIcon /></Slot><Slot w={25}><NodeIcon /></Slot>
              <Slot w={22}><Chev s={11} /></Slot><Slot w={21}><UpDocIcon /></Slot><Slot w={22}><Chev s={11} /></Slot><Slot w={20}><DimBarIcon /></Slot>
            </div>
            <div className="flex h-[37px] items-center">
              <Slot w={25}><ScissorsIcon /></Slot><Slot w={25}><RedX /></Slot><Slot w={25}><RedoIcon /></Slot><Slot w={25}><PaletteIcon /></Slot><Slot w={25}><ConnectIcon /></Slot>
              <Slot w={22}><Chev s={11} /></Slot><Slot w={21}><Rot90Icon /></Slot><Slot w={22}><Chev s={11} /></Slot><Slot w={20}><DashBox><text x="9" y="13" textAnchor="middle" fontSize="10" fill="#888">A</text></DashBox></Slot><Slot w={24}><Chev s={11} /></Slot>
            </div>
          </div>
        </Group>
        <Group w={137} label="View">
          <div className="ml-[10px] flex flex-col">
            <div className="flex h-[37px] items-center">
              <Slot w={25}><Mag><path d="M13 4v8M9 8h8" stroke="#1a9a3a" strokeWidth="2.500" /></Mag></Slot>
              <Slot w={25}><Mag><path d="M9 8h8" stroke="#d33" strokeWidth="2.500" /></Mag></Slot>
              <Slot w={25}><Mag><text x="13" y="11.500" textAnchor="middle" fontSize="9" fontWeight="700" fill="#2b5fc0">A</text></Mag></Slot>
              <Slot w={24}><DashBox><text x="9" y="12" textAnchor="middle" fontSize="8" fill="#aaa">ΔP</text></DashBox></Slot>
              <Slot w={22}><Chev s={11} /></Slot>
            </div>
            <div className="flex h-[37px] items-center">
              <Slot w={25}><DashBox><path d="M10 17v-6l3 2 4 1v3" fill="#fff" stroke="#888" /></DashBox></Slot>
              <Slot w={25}><Mag /></Slot><Slot w={25}><Mag /></Slot><Slot w={24}><Stack /></Slot><Slot w={22}><Chev s={11} /></Slot>
            </div>
          </div>
        </Group>
        <Group w={226} label="Labels and graphics">
          <Big w={64} icon={<LeaderIcon />} lines={['Label']} chev />
          <Big w={94} icon={<DimIcon />} lines={['Horizontal', 'dimension line']} inlineChev />
          <div className="ml-[7px] flex flex-col">
            <div className="flex h-[37px] items-center"><Slot w={27}><span className="text-[12.500px] text-[#2ea1f2]">Abc</span></Slot><Slot w={18}><Chev s={11} /></Slot></div>
            <div className="flex h-[37px] items-center"><Slot w={27}><TableIcon /></Slot><Slot w={26}><NoteIcon /></Slot></div>
          </div>
        </Group>
        <Group w={913} label="Construction">
          <div className="ml-[1px] flex">
            <Big w={84} icon={<RefIcon />} lines={['Reference', 'point']} />
            <Big w={34} icon={<RoomIcon />} lines={['Room']} />
            <Big w={72} icon={<ContourIcon />} lines={['Building', 'contour']} />
            <Big w={70} icon={<GenIcon />} lines={['Building', 'generator']} inlineChev />
            <Big w={56} icon={<WallIcon />} lines={['Wall']} chev />
            <Big w={36} icon={<RoofIcon />} lines={['Roof']} chev />
            <Big w={114} icon={<DoorIcon />} lines={['Door/Opening']} chev />
            <Big w={96} icon={<WindowIcon />} lines={['Window/Recess']} chev />
            <Big w={102} icon={<SlabIcon />} lines={['Slab/Opening']} chev />
            <Big w={64} icon={<GroundIcon />} lines={['Ground', 'modeling']} />
            <Big w={86} icon={<SymbolsIcon />} lines={['Symbols', 'assignment']} />
            <Big w={60} icon={<CompassIcon />} lines={['Compass', 'rose']} />
            <div className="ml-[7px] mt-[12px]"><PcIcon /></div>
          </div>
        </Group>
        <ChevronUp size={14} strokeWidth={2} className="absolute bottom-[3px] right-[6px] text-[#333]" />
      </div>

      {/* workspace */}
      <div className="mt-[8px] flex h-[764px] shrink-0 pl-[8px]">
        {/* project browser */}
        <div className="flex w-[415px] shrink-0 flex-col border border-[#dedede]">
          <div className="flex h-[28px] shrink-0 items-center bg-[#f0f0f0] pl-[7px] pr-[5px] text-[14px] text-[#444]">
            <Svg w={16} h={17}><path d="M1 2h3v3H1zM1 7h3v3H1zM1 12h3v3H1z" fill="#2a6fc0" /><path d="M6 3h9M6 8h9M6 13h9" stroke="#aaa" strokeWidth="1.500" /></Svg>
            <span className="ml-[5px] mr-[9px]">Project browser</span>
            <Grip c="#bdbdbd" />
            <ChevronDown size={14} strokeWidth={1.8} className="ml-[9px] text-[#555]" />
            <span className="ml-[8px]"><Pin /></span>
            <X size={16} strokeWidth={1.6} className="ml-[8px] text-[#555]" />
          </div>
          <div className="h-[57px] shrink-0 border-y border-[#dedede] bg-[#f7f7f7] px-[5px]">
            <div className="mt-[2px] text-[14px] leading-[19px] text-[#444]">Scope</div>
            <div className="mt-[3px] flex">
              <div className="flex h-[26px] w-[371px] items-center border border-[#bdbdbd] bg-[#e3e4e6] pl-[4px] text-[14px]">H&amp;E<ChevronDown size={14} strokeWidth={2.4} className="ml-auto mr-[5px] text-[#222]" /></div>
              <div className="ml-[6px] flex h-[26px] w-[26px] items-center justify-center border border-[#c6c6c6] bg-[#efefef]"><span className="scale-125"><Pencil /></span></div>
            </div>
          </div>
          <div className="flex-1 bg-white pr-[5px]">
            <TreeRow h={27} level={0} icon={<Svg w={19} h={18}><path d="M1 16 4 2l2 1-2 14zM6 16 9 2l2 1-2 14z" fill="#7a2fb0" /><path d="M9 16l3-13 2 1-2 13z" fill="#d24a1e" /><path d="M13 15l3-12 2 1-2 12z" fill="#4a7a2a" /></Svg>} text="Partition definitions" open={false} btns={<span className="flex gap-[4px]"><TreeBtn kind="green" /><TreeBtn kind="yellow" /></span>} />
            <TreeRow h={27} level={0} open icon={<Svg w={18} h={18}><path d="M1 7l8-6 8 6v10H1z" fill="#d8c8b0" stroke="#8a7a68" /><rect x="7" y="11" width="4" height="6" fill="#6b4a2a" /><rect x="3.500" y="8" width="3" height="3" fill="#6a6a6a" /><rect x="11.500" y="8" width="3" height="3" fill="#6a6a6a" /></Svg>} text="Building (Partition view)" />
            <TreeRow h={28} level={1} icon={<FloorIcon />} text="0" btns={<TreeBtn kind="green" />} />
            <TreeRow h={28} level={1} open icon={<FloorIcon />} text="1" btns={<TreeBtn kind="green" />} />
            <TreeRow h={28} level={2} open icon={<PartIcon />} text="02" btns={<span className="flex"><TreeBtn kind="sel" /><span className="ml-[4px]"><TreeBtn kind="a" /></span><span className="ml-[23px]"><TreeBtn kind="minus" /></span></span>} />
            <TreeRow h={26} level={3} icon={<RoomTree />} text="101 - Anteroom" />
            <TreeRow h={25} level={3} icon={<RoomTree />} text="103 - WC" />
            <TreeRow h={25} level={3} icon={<RoomTree />} text="104 - Kitchen" selected />
            <TreeRow h={25} level={3} icon={<RoomTree />} text="105 - Living room" />
            <TreeRow h={25} level={3} icon={<RoomTree />} text="106 - Bathroom" />
            <TreeRow h={25} level={3} icon={<RoomTree />} text="107 - Living room" />
            <TreeRow h={28} level={2} open icon={<PartIcon dark />} text="03" btns={<span className="flex"><TreeBtn kind="sel" /><span className="ml-[4px]"><TreeBtn kind="a" /></span><span className="ml-[23px]"><TreeBtn kind="minus" /></span></span>} />
            <TreeRow h={26} level={3} icon={<RoomTree dark />} text="102 - Anteroom" />
            <TreeRow h={28} level={1} icon={<FloorIcon />} text="2" btns={<TreeBtn kind="green" />} />
            <TreeRow h={28} level={1} icon={<FloorIcon />} text="3" btns={<TreeBtn kind="green" />} />
          </div>
          <div className="h-[56px] shrink-0 border-t border-[#dedede] bg-[#f7f7f7] px-[6px]">
            <div className="mt-[2px] text-[14px] leading-[20px]">Find</div>
            <div className="mt-[2px] h-[26px] w-[403px] border border-[#c4c4c4] bg-white" />
          </div>
        </div>

        {/* editor */}
        <div className="ml-[8px] flex w-[937px] shrink-0 flex-col">
          <div className="flex h-[29px] shrink-0 items-center text-[14px] text-[#444]">
            <div className="flex h-full w-[119px] items-center bg-[#e4e4e4] pl-[5px]">
              <Svg w={17} h={20}><path d="M1 19 3 6l4 3zM7 19l3-17 3 2-3 15z" fill="#ddd" stroke="#999" strokeWidth=".7" /><path d="M2 19l13-18" stroke="#b05a3a" /></Svg>
              <span className="ml-[7px]">2D editor</span>
              <X size={15} strokeWidth={1.6} className="ml-auto mr-[6px] text-[#444]" />
            </div>
            <div className="ml-[6px] flex items-center">
              <Svg w={17} h={20}><path d="M1 19 3 6l4 3zM7 19l3-17 3 2-3 15z" fill="#ddd" stroke="#999" strokeWidth=".7" /><path d="M2 19l13-18" stroke="#b05a3a" /></Svg>
              <span className="ml-[8px]">3D view</span>
            </div>
            <div className="ml-[36px] flex items-center">
              <Svg w={18} h={20}><path d="M1 19V6l6-5 6 5v13z" fill="#b49a82" stroke="#6b5a49" /><rect x="15" y="3" width="2" height="13" fill="#eee" stroke="#888" strokeWidth=".5" /><circle cx="16" cy="16" r="2" fill="#d22" /></Svg>
              <span className="ml-[8px]">H&amp;E</span>
            </div>
            <div className="ml-[36px] flex items-center">
              <Svg w={18} h={20}><rect x="1" y="1" width="13" height="18" fill="#eee" stroke="#aaa" /><rect x="8" y="4" width="9" height="8" fill="#c07a3a" /><path d="M3 14h8M3 16h8" stroke="#999" /></Svg>
              <span className="ml-[7px]">General data</span>
            </div>
            <ChevronDown size={14} strokeWidth={1.8} className="ml-auto mr-[4px] text-[#666]" />
          </div>
          <Plan />
          <div className="flex h-[26px] shrink-0 items-center text-[14px]">
            <span className="flex h-full w-[22px] items-center justify-center border-r border-[#d0d0d0] bg-[#e4e4e4]"><Svg w={11} h={18}><path d="M5.500 0l5 7H8v11H3V7H.5z" fill="#1d86dc" /></Svg></span>
            <span className="flex h-full w-[20px] items-center justify-center bg-[#e4e4e4]"><Svg w={11} h={18}><path d="M5.500 18l5-7H8V0H3v11H.5z" fill="#2a6fc8" /></Svg></span>
            <div className="ml-[2px] flex h-full w-[145px] items-center bg-[#e4e4e4]">
              <span className="ml-[47px]"><FloorIcon /></span><span className="ml-[9px]">1</span><ChevronDown size={14} strokeWidth={2.2} className="ml-auto mr-[4px] text-[#444]" />
            </div>
            {[
              { t: 'Underlay', w: 85, ml: 270, c: '#f5b81c' },
              { t: 'Construction', w: 109, ml: 2, bold: true, c: '#f5b81c' },
              { t: 'H&E(T)', w: 75, ml: 2, bold: true, c: '#f5b81c' },
              { t: 'H&E(V)', w: 75, ml: 2, bold: true, c: '#f5b81c' },
              { t: 'Printout', w: 82, ml: 3, c: '#f5a01c' },
            ].map((b) => (
              <div key={b.t} className={`flex h-[25px] items-center rounded-tr-[10px] border-r border-b border-[#e0e0e0] bg-[#f6f6f6] pl-[3px] ${b.bold ? 'font-semibold text-[#333]' : 'text-[#555]'}`} style={{ width: b.w, marginLeft: b.ml }}>
                <Svg w={10} h={19} className="mr-[3px]"><circle cx="5" cy="6" r="4.500" fill={b.c} /><path d="M3 10h4l-1 7H4z" fill="#d08a1c" /></Svg>
                {b.t}
              </div>
            ))}
            <ChevronDown size={13} strokeWidth={2.2} className="ml-[3px] text-[#444]" />
            <Svg w={18} h={20} className="ml-[5px]"><rect x="1" y="1" width="14" height="13" fill="#cfe8fb" stroke="#4aa0e0" /><path d="M9 8l3 10 5-1-1-5z" fill="#eec9a8" /></Svg>
          </div>
          <div className="flex h-[29px] shrink-0 items-center bg-[#0078d0] pl-[11px] text-[14px] text-white">
            <Svg w={20} h={18}><path d="M10 0l10 18H0z" fill="#f7cf3b" /><path d="M10 6v6" stroke="#444" strokeWidth="2" /><circle cx="10" cy="15" r="1.200" fill="#444" /></Svg>
            <span className="ml-[23px]">15,866; 6,718; 90,681</span>
            <div className="ml-auto flex items-center pr-[16px]">
              <span>ORTO</span><span className="mx-[6px] h-[20px] w-px bg-[#6db5e8]" />
              <span className="text-[#5eaeea]">LOCK</span><span className="mx-[6px] h-[20px] w-px bg-[#6db5e8]" />
              <span className="text-[#5eaeea]">GRID</span><span className="mx-[6px] h-[20px] w-px bg-[#6db5e8]" />
              <span>AUTO</span><span className="mx-[6px] h-[20px] w-px bg-[#6db5e8]" />
              <span className="text-[#5eaeea]">REP</span>
              <ChevronDown size={14} strokeWidth={2.2} className="ml-[22px] text-white" />
            </div>
          </div>
        </div>

        {/* data table */}
        <div className="relative ml-[9px] flex w-[416px] shrink-0 flex-col border border-[#dedede]">
          <div className="flex h-[28px] shrink-0 items-center bg-[#0078d0] pl-[6px] pr-[4px] text-[14.500px] text-white">
            <Svg w={19} h={20}><rect x="1" y="1" width="13" height="18" fill="#f4e6dc" stroke="#c8a080" /><path d="M3 4h9M3 7h9M3 10h9" stroke="#c05a3a" /><path d="M7 17 17 6l1.500 2L9 18z" fill="#f2b035" /></Svg>
            <span className="ml-[4px] text-[11px]">●</span>
            <span className="ml-[5px] mr-[9px]">Data table</span>
            <Grip c="#4aa4e8" />
            <ChevronDown size={14} strokeWidth={2} className="ml-[8px]" />
            <span className="ml-[9px]"><Pin c="#fff" /></span>
            <X size={17} strokeWidth={1.8} className="ml-[8px]" />
          </div>
          <div className="relative flex h-[38px] shrink-0 justify-center border-b border-[#cfcfcf] pt-[3px] text-[14px]">
            1* Room
            <ChevronDown size={13} strokeWidth={2.4} className="absolute left-[5px] top-[13px] text-[#333]" />
          </div>
          <div className="flex h-[605px] shrink-0 overflow-hidden">
            <div className="w-[395px] shrink-0">
              <Section t="Component identification" />
              <Row label="Symbol" value="104" chev pen />
              <Row label="Room type" value="Kitchen" chev />
              <Row label="Description" value="Kitchen" live chev comp />
              <div className="flex h-[28px] pl-[16px] text-[14px]">
                <div className="flex w-[180px] items-center bg-[#bfe3f8] pl-[4px]">Building unit</div>
                <div className="ml-[1px] flex w-[182px] items-center bg-white pl-[2px]">02
                  <span className="ml-auto flex h-[28px] w-[21px] items-center justify-center border border-[#3ba0e8] bg-[#a6d8f8]"><ChevronDown size={13} strokeWidth={2.4} className="text-[#222]" /></span>
                </div>
              </div>
              <Section t="P" h={26} />
              <Row label="F" plain /><Row label="T" plain />
              <Section t="S" />
              <Row label="A" live comp />
              <Row label={<span>h<Sub t="f" /></span>} value="2,50" unit="m" live comp />
              <Row label="V" value="54,90" unit="m³" live comp />
              <Row label="Floor thickness" value="0" unit="mm" live comp />
              <Row label="False ceiling" value="0,00" unit="m" live comp />
              <Section t="Ventilation" h={25} />
              <Row label={<span>n<Sub t="50" /></span>} value="4,0" unit="1/h" live comp />
              <Row label={<span>V̇<Sub t="inf" /></span>} value="13,2" unit="m³/h" live comp />
              <Row label="e" value="0,03" unit="[−]" live comp />
              <Row label="ε" value="1,0" unit="[−]" live comp />
              <Row label={<span>n<Sub t="min" /></span>} value="1,5" unit="1/h" live comp />
              <Row label={<span>V̇<Sub t="min" /></span>} value="82,3" unit="m³/h" live comp />
              <Row label={<span>V̇<Sub t="ex" /></span>} value="0,0" unit="m³/h" live comp />
            </div>
            <div className="flex w-[19px] shrink-0 flex-col items-center bg-[#f7f7f7] pt-[2px]">
              <ChevronUp size={16} strokeWidth={1.6} className="text-[#777]" />
              <div className="mt-[1px] h-[205px] w-[6px] bg-[#dcdcdc]" />
              <ChevronDown size={16} strokeWidth={1.6} className="mt-auto mb-[3px] text-[#777]" />
            </div>
          </div>
          <div className="flex-1 border-t border-[#dedede] bg-[#f8f8f8] pl-[14px] pt-[11px] text-[14px] font-bold text-[#222]">Building unit</div>

          {/* dropdown over the table */}
          <div className="absolute left-[29px] top-[203px] h-[144px] w-[350px] bg-white pt-[1px] shadow-[2px_3px_6px_rgba(0,0,0,0.35)]">
            <DropRow icon={<FloorIcon />} t="0" />
            <DropRow open icon={<FloorIcon />} t="1" />
            <DropRow leaf selected icon={<PartIcon />} t="02" />
            <DropRow leaf icon={<PartIcon />} t="03" />
            <DropRow icon={<FloorIcon />} t="2" />
            <DropRow icon={<FloorIcon />} t="3" />
          </div>
          {/* red annotation */}
          <div className="pointer-events-none absolute left-[-5px] top-[168px] h-[193px] w-[395px] rounded-[20px] border-[2px] border-[#e8222a]" />
        </div>
      </div>
    </div>
  );
}
